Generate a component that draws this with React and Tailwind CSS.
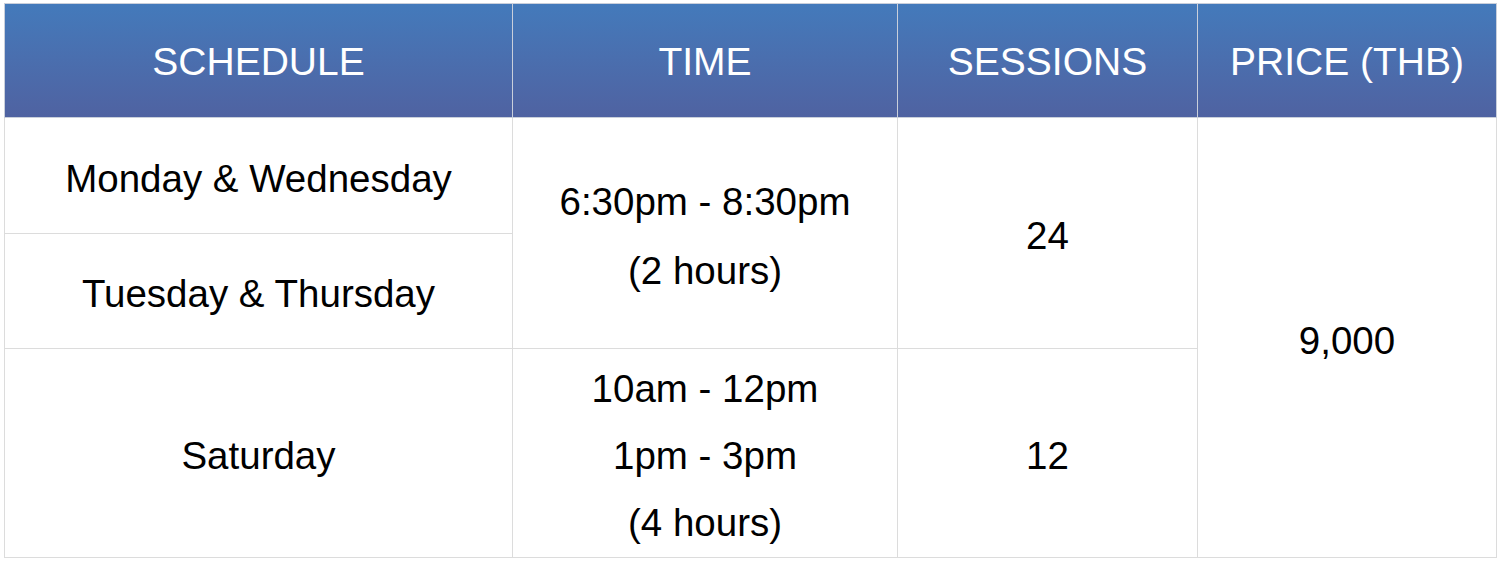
import React from "react";

const font = { fontFamily: '"Liberation Sans", Arial, sans-serif' };

export default function App() {
  const td = "border border-[#dcdcdc] text-center align-middle p-0 pt-[5px]";
  return (
    <div className="w-[1500px] h-[562px] bg-white pl-[4px] pt-[3px]" style={font}>
      <table className="table-fixed border-collapse w-[1492px] text-[38.5px] text-black leading-[69px]">
        <colgroup>
          <col className="w-[508px]" />
          <col className="w-[385px]" />
          <col className="w-[300px]" />
          <col className="w-[299px]" />
        </colgroup>
        <thead>
          <tr className="h-[114px] bg-gradient-to-b from-[#437abb] to-[#4f62a1] text-white text-[39px]">
            <th className="border border-[#c9cfdb] font-normal pt-[1px]">SCHEDULE</th>
            <th className="border border-[#c9cfdb] font-normal pt-[1px]">TIME</th>
            <th className="border border-[#c9cfdb] font-normal pt-[1px]">SESSIONS</th>
            <th className="border border-[#c9cfdb] font-normal pt-[1px]">PRICE (THB)</th>
          </tr>
        </thead>
        <tbody>
          <tr className="h-[116px]">
            <td className={td}>Monday &amp; Wednesday</td>
            <td className={td} rowSpan={2}>
              <div>6:30pm - 8:30pm</div>
              <div>(2 hours)</div>
            </td>
            <td className={td} rowSpan={2}>24</td>
            <td className={td} rowSpan={3}>9,000</td>
          </tr>
          <tr className="h-[115px]">
            <td className={td}>Tuesday &amp; Thursday</td>
          </tr>
          <tr className="h-[209px]">
            <td className={td}>Saturday</td>
            <td className={td + " leading-[67px]"}>
              <div>10am - 12pm</div>
              <div>1pm - 3pm</div>
              <div>(4 hours)</div>
            </td>
            <td className={td}>12</td>
          </tr>
        </tbody>
      </table>
    </div>
  );
}
